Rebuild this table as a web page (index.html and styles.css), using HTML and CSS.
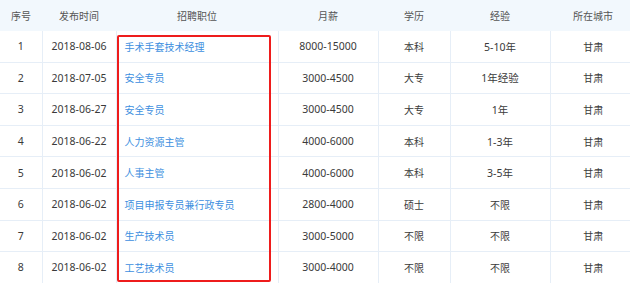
FILE: index.html
```html
<!DOCTYPE html>
<html lang="zh-CN">
<head>
<meta charset="utf-8">
<title>招聘信息</title>
<link rel="stylesheet" href="styles.css">
</head>
<body>
<div class="wrap">
  <table class="jobs">
    <colgroup>
      <col class="c1"><col class="c2"><col class="c3"><col class="c4"><col class="c5"><col class="c6"><col class="c7">
    </colgroup>
    <thead>
      <tr><th>序号</th><th>发布时间</th><th>招聘职位</th><th>月薪</th><th>学历</th><th>经验</th><th>所在城市</th></tr>
    </thead>
    <tbody>
      <tr><td class="num">1</td><td class="num">2018-08-06</td><td class="job">手术手套技术经理</td><td class="num">8000-15000</td><td>本科</td><td class="num">5-10年</td><td>甘肃</td></tr>
      <tr><td class="num">2</td><td class="num">2018-07-05</td><td class="job">安全专员</td><td class="num">3000-4500</td><td>大专</td><td class="num">1年经验</td><td>甘肃</td></tr>
      <tr><td class="num">3</td><td class="num">2018-06-27</td><td class="job">安全专员</td><td class="num">3000-4500</td><td>大专</td><td class="num">1年</td><td>甘肃</td></tr>
      <tr><td class="num">4</td><td class="num">2018-06-22</td><td class="job">人力资源主管</td><td class="num">4000-6000</td><td>本科</td><td class="num">1-3年</td><td>甘肃</td></tr>
      <tr><td class="num">5</td><td class="num">2018-06-02</td><td class="job">人事主管</td><td class="num">4000-6000</td><td>本科</td><td class="num">3-5年</td><td>甘肃</td></tr>
      <tr><td class="num">6</td><td class="num">2018-06-02</td><td class="job">项目申报专员兼行政专员</td><td class="num">2800-4000</td><td>硕士</td><td>不限</td><td>甘肃</td></tr>
      <tr><td class="num">7</td><td class="num">2018-06-02</td><td class="job">生产技术员</td><td class="num">3000-5000</td><td>不限</td><td>不限</td><td>甘肃</td></tr>
      <tr><td class="num">8</td><td class="num">2018-06-02</td><td class="job">工艺技术员</td><td class="num">3000-4000</td><td>不限</td><td>不限</td><td>甘肃</td></tr>
    </tbody>
  </table>
  <div class="highlight"></div>
</div>
</body>
</html>
```

FILE: styles.css
```css
html, body {
  margin: 0;
  padding: 0;
  background: #ffffff;
  overflow: hidden;
}

.wrap {
  position: relative;
  width: 636px;
}

.jobs {
  width: 636px;
  border-collapse: collapse;
  table-layout: fixed;
  font-family: "Noto Sans", "Noto Sans CJK SC", sans-serif;
  font-size: 10px;
  color: #3a3a3a;
}

.c1 { width: 42px; }
.c2 { width: 74px; }
.c3 { width: 162px; }
.c4 { width: 100px; }
.c5 { width: 72px; }
.c6 { width: 100px; }
.c7 { width: 86px; }

.jobs th {
  height: 31px;
  padding: 0;
  background: #f2f8fd;
  font-weight: normal;
  color: #555555;
  text-align: center;
  vertical-align: middle;
}

.jobs td {
  height: 30.6px;
  padding: 0;
  text-align: center;
  vertical-align: middle;
  border-left: 1px solid #e6eef7;
  border-bottom: 1px solid #e6eef7;
  white-space: nowrap;
}

.jobs td:first-child {
  border-left: none;
}

.jobs td.num {
  font-size: 10.5px;
}

.jobs td.job {
  text-align: left;
  padding-left: 8px;
  color: #3d8fe0;
}

.highlight {
  position: absolute;
  left: 117px;
  top: 35px;
  width: 150px;
  height: 243px;
  border: 2px solid #ee1c1c;
  border-radius: 2px;
  pointer-events: none;
}
```
